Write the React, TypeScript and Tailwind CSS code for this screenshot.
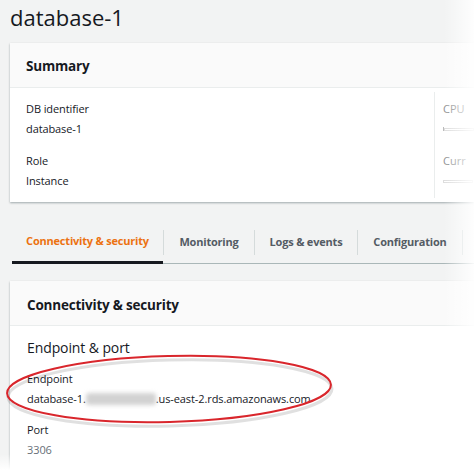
import React from "react";

const font = { fontFamily: '"Open Sans", "Noto Sans", Arial, sans-serif' };

export default function App() {
  return (
    <div
      className="relative w-[474px] h-[470px] overflow-hidden bg-[#f2f3f3] text-[#16191f]"
      style={font}
    >
      {/* Title */}
      <div className="h-[43px] pl-[10px] pt-[0px] text-[22px] leading-[34px]">
        database-1
      </div>

      {/* Summary card */}
      <div className="ml-[10px] bg-white shadow-[0_1px_2px_rgba(0,28,36,0.35)]">
        <div className="h-[45px] bg-[#fafafa] border-b border-[#eaeded] pl-[16px] pt-[2px] flex items-center text-[13.5px] font-bold tracking-[-0.2px]">
          Summary
        </div>
        <div className="h-[114px] flex">
          <div className="w-[431px] border-r border-[#eaeded] my-[4px] pl-[16px] pt-[7px] text-[11px] leading-[20px] tracking-[-0.1px]">
            <div>DB identifier</div>
            <div>database-1</div>
            <div className="h-[12px]" />
            <div>Role</div>
            <div>Instance</div>
          </div>
          <div className="pl-[8px] pt-[11px] text-[11px] leading-[20px] text-[#8d9092]">
            <div>CPU</div>
            <div className="flex items-center h-[20px]">
              <div className="w-[1px] h-[4px] bg-[#bbb]" />
              <div className="w-[30px] h-[3px] border border-[#ddd]" />
            </div>
            <div className="h-[12px]" />
            <div>Curr</div>
            <div className="flex items-center h-[20px]">
              <div className="w-[30px] h-[3px] border border-[#ddd]" />
            </div>
          </div>
        </div>
      </div>

      {/* Tabs */}
      <div className="mt-[20px] ml-[12px] h-[42px] flex items-stretch border-b border-[#aab7b8] text-[11px] font-bold tracking-[-0.2px] text-[#545b64]">
        <div className="w-[151px] flex items-center justify-center text-[#ec7211] border-b-[3px] border-[#16191f] mb-[-1px]">
          Connectivity &amp; security
        </div>
        <div className="flex items-center">
          <div className="w-[1px] h-[25px] bg-[#d5dbdb]" />
        </div>
        <div className="w-[90px] flex items-center justify-center">Monitoring</div>
        <div className="flex items-center">
          <div className="w-[1px] h-[25px] bg-[#d5dbdb]" />
        </div>
        <div className="w-[102px] flex items-center justify-center">Logs &amp; events</div>
        <div className="flex items-center">
          <div className="w-[1px] h-[25px] bg-[#d5dbdb]" />
        </div>
        <div className="w-[104px] flex items-center justify-center">Configuration</div>
        <div className="flex items-center">
          <div className="w-[1px] h-[25px] bg-[#d5dbdb]" />
        </div>
      </div>

      {/* Connectivity card */}
      <div className="mt-[17px] ml-[10px] bg-white shadow-[0_1px_2px_rgba(0,28,36,0.35)]">
        <div className="h-[45px] bg-[#fafafa] border-b border-[#eaeded] pl-[17px] pt-[4px] flex items-center text-[13.5px] font-bold tracking-[-0.2px]">
          Connectivity &amp; security
        </div>
        <div className="pl-[17px] pt-[10px] pb-[20px] tracking-[-0.1px]">
          <div className="text-[14px] leading-[24px]">Endpoint &amp; port</div>
          <div className="mt-[9px] text-[11px] leading-[19px]">Endpoint</div>
          <div className="mt-[1px] text-[11px] leading-[19px] flex items-center">
            <span>database-1.</span>
            <span className="inline-block w-[70px] h-[12px] rounded-[3px] bg-[#d2d2d2] blur-[2px]" />
            <span>.us-east-2.rds.amazonaws.com</span>
          </div>
          <div className="mt-[12px] text-[11px] leading-[19px]">Port</div>
          <div className="text-[11px] leading-[21px] text-[#687078]">3306</div>
        </div>
      </div>

      {/* Red ellipse annotation */}
      <svg className="absolute left-0 top-0 pointer-events-none" width="474" height="470">
        <ellipse
          cx="169"
          cy="391"
          rx="162"
          ry="33"
          transform="rotate(-1.5 169 391) translate(1 2)"
          fill="none"
          stroke="rgba(0,0,0,0.12)"
          strokeWidth="3"
        />
        <ellipse
          cx="169"
          cy="389"
          rx="162"
          ry="33"
          transform="rotate(-1.5 169 389)"
          fill="none"
          stroke="#d9262c"
          strokeWidth="2"
        />
      </svg>

      {/* Right and bottom fades */}
      <div className="absolute right-0 top-0 h-full w-[30px] bg-gradient-to-r from-transparent to-white/90" />
      <div className="absolute left-0 bottom-0 w-full h-[16px] bg-gradient-to-b from-transparent to-white" />
    </div>
  );
}
